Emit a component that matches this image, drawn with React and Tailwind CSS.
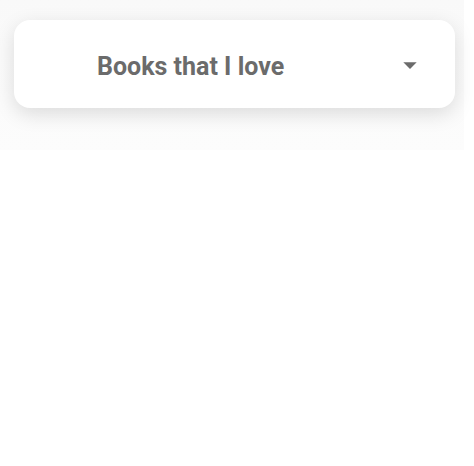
export default function App() {
  return (
    <div className="min-h-[466px] w-full bg-white" style={{ fontFamily: 'Roboto, "Liberation Sans", sans-serif' }}>
      <div className="h-[150px] w-[464px] bg-gradient-to-b from-[#f9f9f9] to-[#fcfcfc] pl-[14px] pt-[20px]">
        <div className="flex h-[88px] w-[441px] items-center rounded-[16px] bg-white pl-[83px] pr-[36px] pt-[5px] shadow-[0_6px_20px_rgba(0,0,0,0.13)]">
          <span className="flex-1 text-[25px] font-bold text-[#6b6b6b]">Books that I love</span>
          <svg width="32" height="32" viewBox="0 0 24 24" className="mt-[-3px] mr-[-7px]">
            <path d="M7 10l5 5 5-5z" fill="#6b6b6b" />
          </svg>
        </div>
      </div>
    </div>
  );
}
